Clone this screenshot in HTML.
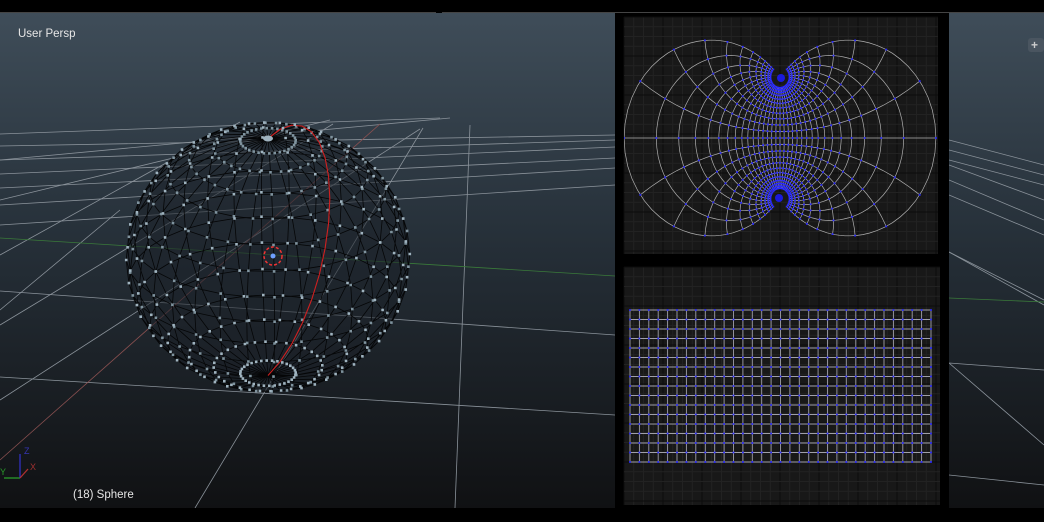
<!DOCTYPE html>
<html><head><meta charset="utf-8"><style>
html,body{margin:0;padding:0;background:#000;width:1044px;height:522px;overflow:hidden}
svg{display:block}
text{font-family:"Liberation Sans",sans-serif}
</style></head><body>
<svg id="s" width="1044" height="522" viewBox="0 0 1044 522" xmlns="http://www.w3.org/2000/svg">
<defs>
<linearGradient id="vg" x1="0" y1="0" x2="0" y2="1">
<stop offset="0" stop-color="#3f4d59"/><stop offset="0.45" stop-color="#263039"/><stop offset="1" stop-color="#101113"/>
</linearGradient>
<clipPath id="cl"><rect x="0" y="13" width="615" height="495"/></clipPath>
<clipPath id="cr"><rect x="949" y="13" width="95" height="495"/></clipPath>
<clipPath id="cu1"><rect x="624" y="17" width="314" height="237"/></clipPath>
</defs>
<rect width="1044" height="522" fill="#000"/>
<rect x="0" y="13" width="615" height="495" fill="url(#vg)"/>
<rect x="949" y="13" width="95" height="495" fill="url(#vg)"/>
<line x1="0" y1="12.5" x2="436" y2="12.5" stroke="#444"/>
<line x1="442" y1="12.5" x2="1044" y2="12.5" stroke="#444"/>
<g id="floor" clip-path="url(#cl)" stroke="#8a929a" stroke-width="0.8" fill="none"></g>
<g id="floorR" clip-path="url(#cr)" stroke="#8a929a" stroke-width="0.8" fill="none"></g>
<g id="sph"></g>
<rect x="624" y="17" width="314" height="237" fill="#181818"/>
<rect x="624" y="267" width="316" height="238" fill="#181818"/>
<g id="uvbg" stroke-width="1" fill="none"></g>
<g id="uv1" clip-path="url(#cu1)"></g>
<g id="uv2"></g>
<text x="18" y="37" fill="#e6e6e6" font-size="11.5">User Persp</text>
<text x="73" y="498" fill="#e6e6e6" font-size="11.5">(18) Sphere</text>
<g stroke-width="1.3" fill="none">
<line x1="20" y1="478" x2="4" y2="478" stroke="#2a9a2a"/>
<line x1="20" y1="478" x2="20" y2="454" stroke="#3030c0"/>
<line x1="20" y1="478" x2="28" y2="469" stroke="#b03030"/>
</g>
<text x="24" y="454" fill="#3535b0" font-size="9">Z</text>
<text x="30" y="470" fill="#a03030" font-size="9">X</text>
<text x="0" y="475" fill="#2a9a2a" font-size="9">Y</text>
<rect x="1028" y="38" width="16" height="14" rx="3" fill="#4a5560"/>
<text x="1031" y="49" fill="#ccc" font-size="12" font-weight="bold">+</text>
</svg>
<script>
var NS="http://www.w3.org/2000/svg";
function el(p,t,a){var e=document.createElementNS(NS,t);for(var k in a)e.setAttribute(k,a[k]);p.appendChild(e);return e;}
var g=id=>document.getElementById(id);
var F=g('floor');
var H=[[0,134,440,118],[0,146,615,135],[0,160,615,140],[0,174,615,147],[0,188,615,158],[0,205,615,168],[0,225,615,185],[0,291,615,335],[0,377,615,415],[0,160,450,118],[0,200,330,120],[0,255,240,122],[0,310,120,210]];
H.forEach(l=>el(F,'line',{x1:l[0],y1:l[1],x2:l[2],y2:l[3]}));
[[470,125,455,508],[423,128,195,508],[333,124,0,325],[420,129,0,400]].forEach(l=>el(F,'line',{x1:l[0],y1:l[1],x2:l[2],y2:l[3]}));
el(F,'line',{x1:0,y1:238,x2:615,y2:276,stroke:'#3a7a3a'});
el(F,'line',{x1:0,y1:460,x2:380,y2:124,stroke:'#8a5050'});
var FR=g('floorR');
[[949,140,1044,165],[949,150,1044,175],[949,160,1044,185],[949,165,1044,200],[949,180,1044,220],[949,195,1044,235],[949,252,1044,300],[949,252,1044,305],[949,363,1044,370],[949,363,1044,445],[949,475,1044,485]].forEach(l=>el(FR,'line',{x1:l[0],y1:l[1],x2:l[2],y2:l[3]}));
el(FR,'line',{x1:949,y1:298,x2:1044,y2:302,stroke:'#3a7a3a'});
// sphere
var S=g('sph'),cx=268,cy=257,rx=142,ry=135,tilt=-0.5,rot=0.15;
el(S,'ellipse',{cx:cx,cy:cy,rx:rx,ry:ry,fill:'#1b2128',opacity:0.55});
function P(la,lo){var x=Math.cos(la)*Math.sin(lo+rot),y=-Math.sin(la),z=Math.cos(la)*Math.cos(lo+rot);
var y2=y*Math.cos(tilt)-z*Math.sin(tilt),z2=y*Math.sin(tilt)+z*Math.cos(tilt);return[cx+x*rx,cy-y2*ry,z2];}
var NL=32,NR=16,d="",dots="",dotsB="";
for(var i=1;i<NR;i++)for(var j=0;j<NL;j++){var la=Math.PI/2-i*Math.PI/NR,lo=j*2*Math.PI/NL;
var a=P(la,lo),b=P(la,lo+2*Math.PI/NL),c=P(la-Math.PI/NR,lo);
d+="M"+a[0].toFixed(1)+" "+a[1].toFixed(1)+"L"+b[0].toFixed(1)+" "+b[1].toFixed(1)+"M"+a[0].toFixed(1)+" "+a[1].toFixed(1)+"L"+c[0].toFixed(1)+" "+c[1].toFixed(1);
var sq="M"+(a[0]-1.3).toFixed(1)+" "+(a[1]-1.3).toFixed(1)+"h2.6v2.6h-2.6z";
if(a[2]>-0.05)dots+=sq;else dotsB+=sq;}
for(var j=0;j<NL;j++){var a=P(Math.PI/2-Math.PI/NR,j*2*Math.PI/NL),p=P(Math.PI/2,0);d+="M"+a[0]+" "+a[1]+"L"+p[0]+" "+p[1];
a=P(-Math.PI/2+Math.PI/NR,j*2*Math.PI/NL);p=P(-Math.PI/2,0);d+="M"+a[0]+" "+a[1]+"L"+p[0]+" "+p[1];}
el(S,'path',{d:d,stroke:'#050607',"stroke-width":0.8,fill:'none'});
el(S,'path',{d:dotsB,fill:'#7f939e'});
var seam="";for(var i=0;i<=NR;i++){var q=P(Math.PI/2-i*Math.PI/NR,0.3);seam+=(i?"L":"M")+q[0].toFixed(1)+" "+q[1].toFixed(1);}
el(S,'path',{d:seam,stroke:'#d02020',"stroke-width":1.1,fill:'none'});
el(S,'path',{d:dots,fill:'#9fb3bf'});
var bp=P(-Math.PI/2,0);el(S,'ellipse',{cx:bp[0],cy:bp[1],rx:5,ry:3,fill:'#9fb3bf'});
el(S,'circle',{cx:273,cy:256,r:9,fill:'none',stroke:'#e33',"stroke-width":1.5,"stroke-dasharray":"3 2"});
el(S,'circle',{cx:273,cy:256,r:2.5,fill:'#6fa0ff'});
// uv bg grids
var B=g('uvbg');
function grid(x0,y0,w,h){for(var x=x0;x<=x0+w;x+=9.75)el(B,'line',{x1:x,y1:y0,x2:x,y2:y0+h,stroke:(Math.round((x-x0)/9.75)%4==0)?'#0c0c0c':'#222'});
for(var y=y0;y<=y0+h;y+=9.75)el(B,'line',{x1:x0,y1:y,x2:x0+w,y2:y,stroke:(Math.round((y-y0)/9.75)%4==0)?'#0c0c0c':'#222'});}
grid(624,17,314,237);grid(624,267,316,238);
// uv1 bipolar
var U=g('uv1'),ucx=780,ucy=138,A=60,s0=0.66,NM=16,KX=0.89;
function BP(t,s){var den=Math.cosh(t)-Math.cos(s),xb=A*Math.sinh(t)/den,yb=A*Math.sin(s)/den;return[ucx+yb*KX,ucy-xb];}
var sig=[];for(var i=0;i<=NM;i++){var s=s0+(Math.PI-s0)*i/NM;sig.push(s);if(i<NM)sig.push(-s);}
var taus=[];for(var k=-11;k<=11;k++)taus.push(k*0.22);
var ud="",ub="";
sig.forEach(s=>{var pts=[];for(var t=-2.5;t<=2.501;t+=0.05)pts.push(BP(t,s));ud+="M"+pts.map(p=>p[0].toFixed(1)+" "+p[1].toFixed(1)).join("L");});
taus.forEach(t=>{[1,-1].forEach(sg=>{var pts=[];for(var i=0;i<=40;i++){var s=sg*(s0+(Math.PI-s0)*i/40);pts.push(BP(t,s));}ud+="M"+pts.map(p=>p[0].toFixed(1)+" "+p[1].toFixed(1)).join("L");});
sig.forEach(s=>{var p=BP(t,s);ub+="M"+(p[0]-0.9).toFixed(1)+" "+(p[1]-0.9).toFixed(1)+"h1.8v1.8h-1.8z";});});
el(U,'path',{d:ud,stroke:'#b0b0b0',"stroke-width":0.7,fill:'none'});
el(U,'path',{d:ub,fill:'#2a2aff'});
el(U,'circle',{cx:ucx+1,cy:ucy-60,r:4,fill:'#1a1add'});el(U,'circle',{cx:ucx-1,cy:ucy+60,r:4,fill:'#1a1add'});
// uv2 grid
var V=g('uv2'),vd="",vb="",x0=630,y0=310,W=301,Hh=152,nc=32,nr=16;
for(var i=0;i<=nc;i++){var x=x0+W*i/nc;vd+="M"+x.toFixed(1)+" "+y0+"V"+(y0+Hh);}
for(var j=0;j<=nr;j++){var y=y0+Hh*j/nr;vd+="M"+x0+" "+y.toFixed(1)+"H"+(x0+W);}
for(var i=0;i<=nc;i++)for(var j=0;j<=nr;j++){var x=x0+W*i/nc,y=y0+Hh*j/nr;vb+="M"+(x-0.9).toFixed(1)+" "+(y-0.9).toFixed(1)+"h1.8v1.8h-1.8z";}
el(V,'path',{d:vd,stroke:'#a0a0a8',"stroke-width":0.9,fill:'none'});
el(V,'path',{d:vb,fill:'#2a2aff'});
</script>
</body></html>
